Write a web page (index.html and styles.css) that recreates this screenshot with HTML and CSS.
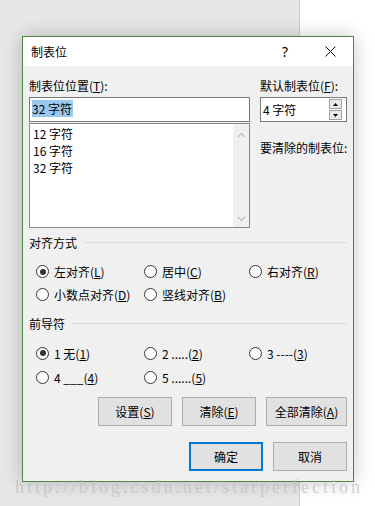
FILE: index.html
```html
<!DOCTYPE html>
<html lang="zh-CN">
<head>
<meta charset="utf-8">
<title>制表位</title>
<link rel="stylesheet" href="styles.css">
</head>
<body>
<div class="dialog">
  <div class="titlebar">
    <span class="title">制表位</span>
    <span class="help">?</span>
    <span class="close"><svg width="11" height="11" viewBox="0 0 11 11"><path d="M0.5 0.5L10.5 10.5M10.5 0.5L0.5 10.5" stroke="#111" stroke-width="1" fill="none"/></svg></span>
  </div>
  <div class="body">
    <div class="top">
      <div class="col">
        <div class="label">制表位位置(<u>T</u>):</div>
        <div class="textbox"><span class="sel">32 字符</span></div>
        <div class="listbox">
          <ul class="items"><li>12 字符</li><li>16 字符</li><li>32 字符</li></ul>
          <div class="scrollbar">
            <svg width="9" height="6" viewBox="0 0 9 6"><path d="M1 5L4.5 1.5L8 5" stroke="#bfbfbf" stroke-width="1.3" fill="none"/></svg>
            <svg width="9" height="6" viewBox="0 0 9 6"><path d="M1 1L4.5 4.5L8 1" stroke="#bfbfbf" stroke-width="1.3" fill="none"/></svg>
          </div>
        </div>
      </div>
      <div class="col">
        <div class="label">默认制表位(<u>F</u>):</div>
        <div class="spin">
          <span class="spin-text">4 字符</span>
          <div class="spin-btns">
            <span class="sb"><svg width="5" height="3" viewBox="0 0 5 3"><path d="M0 3L2.5 0L5 3Z" fill="#000"/></svg></span>
            <span class="sb"><svg width="5" height="3" viewBox="0 0 5 3"><path d="M0 0L2.5 3L5 0Z" fill="#000"/></svg></span>
          </div>
        </div>
        <div class="label clear-label">要清除的制表位:</div>
      </div>
    </div>

    <div class="group-head">对齐方式</div>
    <div class="radios align">
      <label class="radio"><span class="dot on"></span><span>左对齐(<u>L</u>)</span></label>
      <label class="radio"><span class="dot"></span><span>居中(<u>C</u>)</span></label>
      <label class="radio"><span class="dot"></span><span>右对齐(<u>R</u>)</span></label>
      <label class="radio"><span class="dot"></span><span>小数点对齐(<u>D</u>)</span></label>
      <label class="radio"><span class="dot"></span><span>竖线对齐(<u>B</u>)</span></label>
    </div>

    <div class="group-head">前导符</div>
    <div class="radios leader">
      <label class="radio"><span class="dot on"></span><span>1 无(<u>1</u>)</span></label>
      <label class="radio"><span class="dot"></span><span>2 .....(<u>2</u>)</span></label>
      <label class="radio"><span class="dot"></span><span>3 ----(<u>3</u>)</span></label>
      <label class="radio"><span class="dot"></span><span>4 ___(<u>4</u>)</span></label>
      <label class="radio"><span class="dot"></span><span>5 ......(<u>5</u>)</span></label>
    </div>

    <div class="btn-row">
      <button class="btn">设置(<u>S</u>)</button>
      <button class="btn">清除(<u>E</u>)</button>
      <button class="btn wide">全部清除(<u>A</u>)</button>
    </div>
    <div class="btn-row ok-row">
      <button class="btn default">确定</button>
      <button class="btn">取消</button>
    </div>
  </div>
</div>
<div class="watermark">http://blog.csdn.net/starperfection</div>
</body>
</html>
```

FILE: styles.css
```css
html, body {
  margin: 0;
  padding: 0;
}
body {
  width: 375px;
  height: 506px;
  overflow: hidden;
  position: relative;
  background: linear-gradient(to right, #e7e7e7 0, #e7e7e7 299px, #cdcdcd 299px, #cdcdcd 300px, #ffffff 300px);
  font-family: "Noto Sans CJK SC", "Noto Sans", sans-serif;
  font-size: 12px;
  line-height: 17px;
  color: #000;
}
u {
  text-decoration: underline;
  text-underline-offset: 1px;
}
.dialog {
  position: absolute;
  left: 22px;
  top: 36px;
  width: 330px;
  height: 444px;
  border: 1px solid #4a8a3c;
  background: #f0f0f0;
  box-shadow: 0 0 18px rgba(0, 0, 0, 0.22);
  display: flex;
  flex-direction: column;
}
.titlebar {
  height: 29px;
  background: #fff;
  display: flex;
  align-items: center;
  padding-left: 8px;
}
.title {
  flex: 1;
}
.help {
  width: 44px;
  text-align: center;
  font-size: 14px;
  font-family: "Noto Sans", sans-serif;
}
.close {
  width: 46px;
  display: flex;
  justify-content: center;
  align-items: center;
}
.body {
  flex: 1;
  padding: 11px 6px 0 6px;
  display: flex;
  flex-direction: column;
}
.top {
  display: grid;
  grid-template-columns: 221px 87px;
  column-gap: 10px;
}
.label {
  height: 17px;
  white-space: nowrap;
}
.textbox {
  margin-top: 3px;
  height: 21px;
  border: 1px solid #7a7a7a;
  background: #fff;
  padding: 2px 0 0 2px;
}
.sel {
  display: inline-block;
  background: #99c9ef;
  padding-right: 1px;
}
.listbox {
  margin-top: 1px;
  height: 103px;
  border: 1px solid #828790;
  background: #fff;
  display: flex;
}
.items {
  flex: 1;
  list-style: none;
  margin: 0;
  padding: 1px 0 0 3px;
}
.scrollbar {
  width: 16px;
  background: #f0f0f0;
  display: flex;
  flex-direction: column;
  justify-content: space-between;
  align-items: center;
  padding: 8px 0 5px;
}
.spin {
  margin-top: 3px;
  height: 23px;
  border: 1px solid #7a7a7a;
  background: #fff;
  display: flex;
  align-items: center;
  padding-left: 2px;
}
.spin-text {
  flex: 1;
}
.spin-btns {
  display: flex;
  flex-direction: column;
  gap: 1px;
  margin-right: 4px;
}
.sb {
  width: 11px;
  height: 8px;
  border: 1px solid #a0a0a0;
  background: #e9e9e9;
  display: flex;
  align-items: center;
  justify-content: center;
}
.clear-label {
  margin-top: 17px;
}
.group-head {
  margin-top: 6px;
  height: 17px;
  display: flex;
  align-items: center;
}
.group-head::after {
  content: "";
  flex: 1;
  height: 1px;
  background: #dcdcdc;
  margin-left: 7px;
}
.radios + .group-head {
  margin-top: 9px;
}
.radios {
  display: grid;
  grid-template-columns: 108px 105px 1fr;
  padding-left: 7px;
  margin-top: 9px;
}
.align {
  grid-auto-rows: 23px;
}
.leader {
  grid-auto-rows: 24px;
}
.radio {
  display: flex;
  align-items: center;
  gap: 5px;
  white-space: nowrap;
}
.dot {
  width: 11px;
  height: 11px;
  border: 1px solid #333;
  border-radius: 50%;
  background: #fff;
  display: flex;
  align-items: center;
  justify-content: center;
  flex: none;
}
.dot.on::after {
  content: "";
  width: 6px;
  height: 6px;
  border-radius: 50%;
  background: #333;
}
.btn-row {
  display: flex;
  justify-content: flex-end;
  gap: 10px;
  margin-top: 8px;
}
.ok-row {
  margin-top: 16px;
}
.btn {
  width: 74px;
  height: 29px;
  border: 1px solid #adadad;
  background: #e1e1e1;
  font-family: inherit;
  font-size: 12px;
  color: #000;
  padding: 0;
  margin: 0;
}
.btn.wide {
  width: 81px;
}
.btn.default {
  border: 2px solid #0078d7;
}
.watermark {
  position: absolute;
  left: 15px;
  top: 477px;
  font-family: "Liberation Serif", serif;
  font-size: 18px;
  line-height: 20px;
  letter-spacing: 3px;
  color: rgba(190, 190, 190, 0.7);
  white-space: nowrap;
}
```
